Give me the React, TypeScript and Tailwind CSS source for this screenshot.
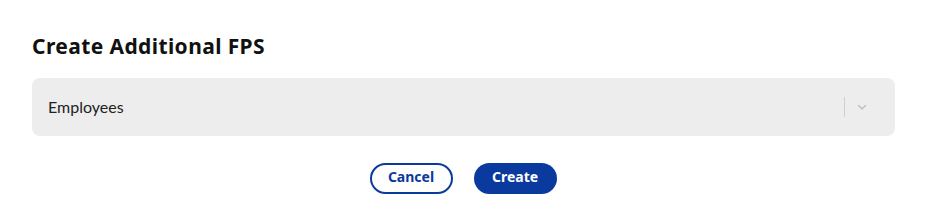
import React from "react";

export default function App() {
  return (
    <div className="w-[926px] h-[221px] bg-white px-[32px] pt-[32px]" style={{ fontFamily: "Lato, 'Noto Sans', sans-serif" }}>
      <h2 className="text-[21px] leading-[28px] font-bold text-[#111] tracking-[0.4px]" style={{ fontFamily: "'Noto Sans', Lato, sans-serif" }}>
        Create Additional FPS
      </h2>
      <div className="mt-[18px] h-[58px] w-[863px] rounded-[8px] bg-[#ededed] flex items-center pl-[16px] pr-[27px]">
        <span className="flex-1 text-[16px] text-[#222]">Employees</span>
        <div className="w-px h-[20px] bg-[#cfcfcf]" />
        <svg className="ml-[11px]" width="12" height="12" viewBox="0 0 12 12" fill="none" stroke="#c4c4c4" strokeWidth="1.6" strokeLinecap="round" strokeLinejoin="round">
          <path d="M2.5 4.5 L6 7.8 L9.5 4.5" />
        </svg>
      </div>
      <div className="mt-[27px] flex justify-center gap-[21px]" style={{ fontFamily: "'Noto Sans', Lato, sans-serif" }}>
        <button className="w-[83px] h-[31px] rounded-full border-2 border-[#0a3a9e] text-[#0a3a9e] text-[14px] font-bold bg-white leading-none pb-[3px]">
          Cancel
        </button>
        <button className="w-[83px] h-[31px] rounded-full bg-[#0a3a9e] text-white text-[14px] font-bold leading-none pb-[3px]">
          Create
        </button>
      </div>
    </div>
  );
}
